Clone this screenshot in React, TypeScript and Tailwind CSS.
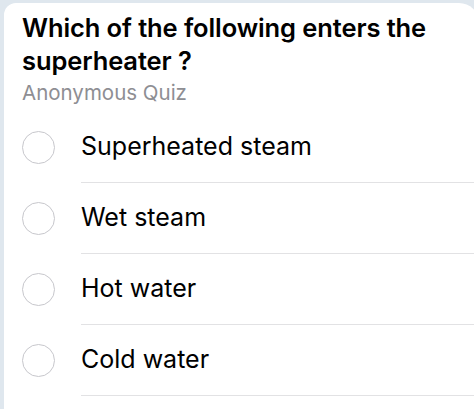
const OPTIONS = ["Superheated steam", "Wet steam", "Hot water", "Cold water"];

export default function App() {
  return (
    <div className="h-[409px] w-[474px] overflow-hidden bg-[#dfe7ee] pl-[4px] pt-[3px] font-['Inter',sans-serif]">
      <div className="h-[420px] w-[475px] rounded-tl-[12px] rounded-tr-[20px] bg-white pt-[8px]">
        <div className="pl-[18px] pr-4">
          <p className="text-[25.5px] font-semibold leading-[33px] tracking-[-0.1px] text-black">
            Which of the following enters the superheater ?
          </p>
          <p className="mt-[3px] text-[20.5px] leading-[26px] text-[#8e8e93]">Anonymous Quiz</p>
        </div>

        <div className="mt-[6px]">
          {OPTIONS.map((opt) => (
            <div key={opt} className="flex items-center">
              <div className="w-[77px] shrink-0 pl-[18px]">
                <div className="h-[33px] w-[33px] rounded-full border-[1.5px] border-[#c7c7cc]" />
              </div>
              <div className="flex h-[71px] flex-1 items-center border-b border-[#e2e2e4]">
                <span className="-mt-[1px] text-[25px] text-black">{opt}</span>
              </div>
            </div>
          ))}
        </div>
      </div>
    </div>
  );
}
